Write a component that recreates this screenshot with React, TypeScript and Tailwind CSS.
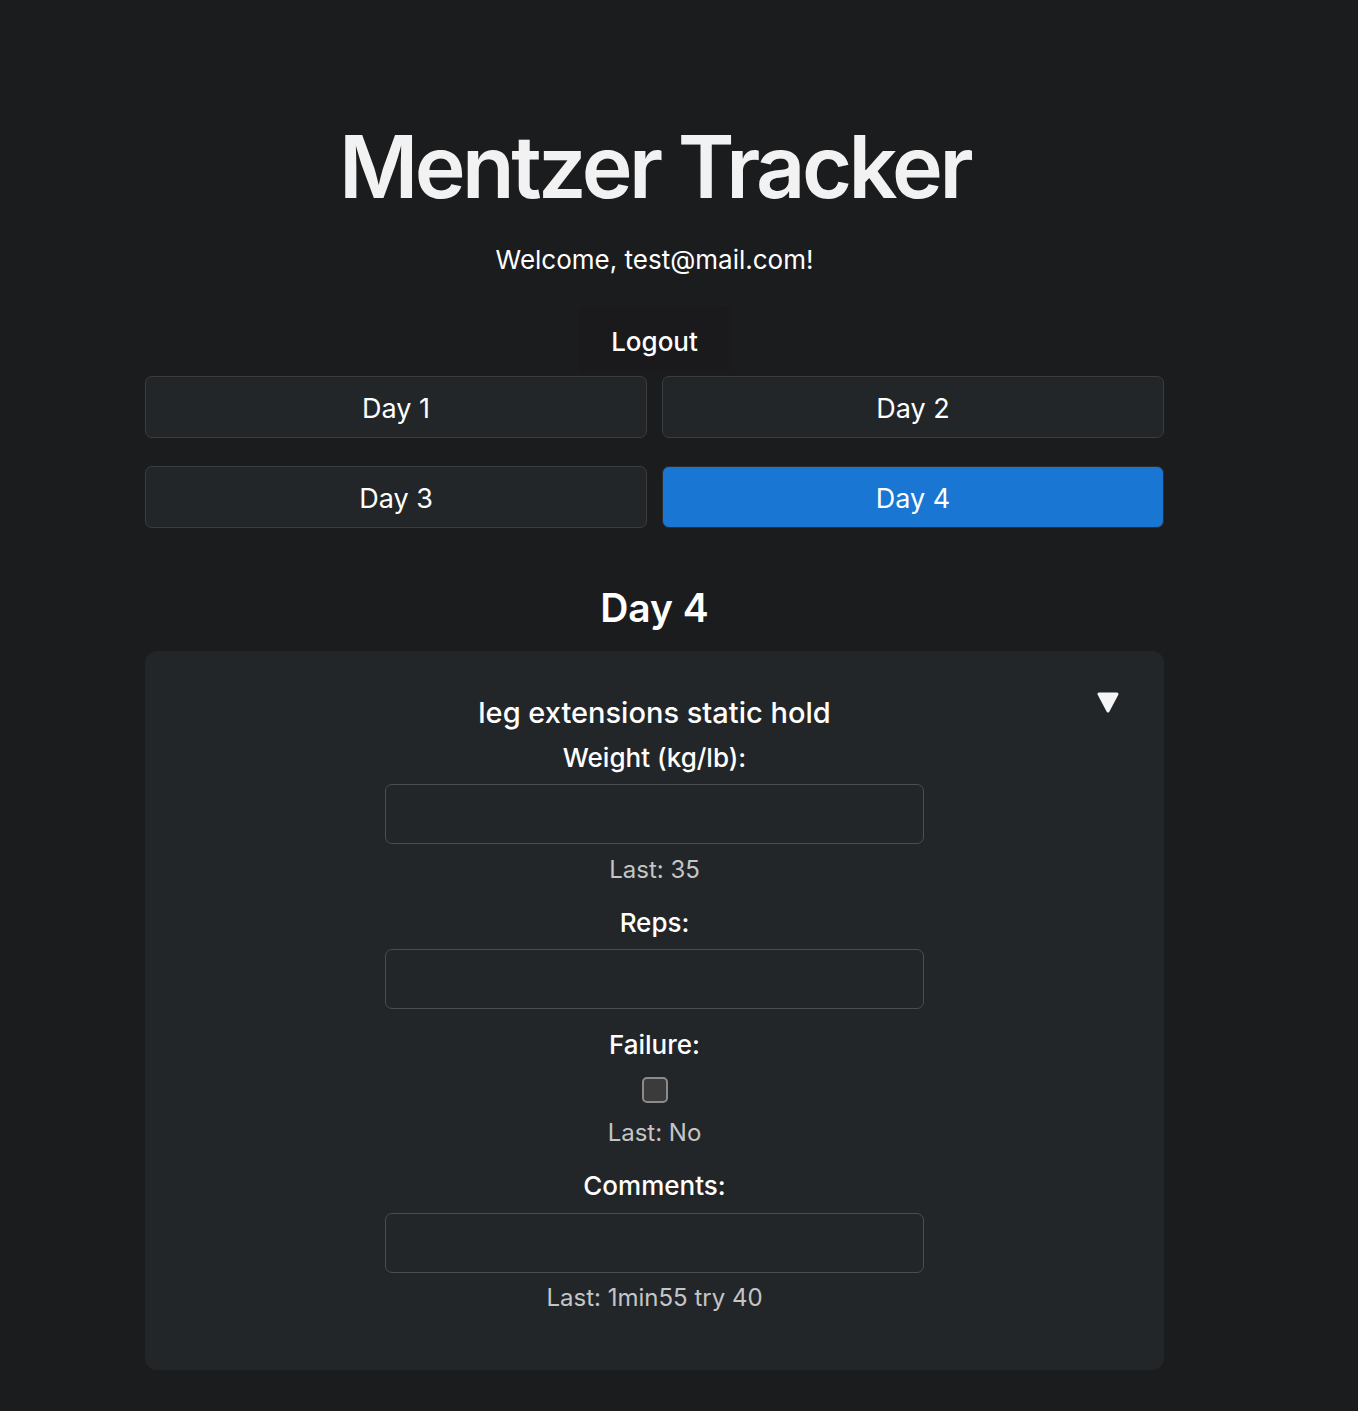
import { useState } from 'react';

const days = ['Day 1', 'Day 2', 'Day 3', 'Day 4'];

function Field({ label, last }: { label: string; last: string }) {
  return (
    <>
      <div className="h-[36px] mt-[17px] flex items-center justify-center text-[26px] font-medium text-white">{label}</div>
      <input
        type="text"
        className="mt-[9px] w-[539px] h-[60px] rounded-[7px] border border-[#4c4d4f] bg-[#232629] outline-none"
      />
      {last && <div className="h-[34px] mt-[9px] flex items-center justify-center text-[24px] text-[#c4c5c6]">{last}</div>}
    </>
  );
}

export default function App() {
  const [active, setActive] = useState('Day 4');

  return (
    <div className="min-h-screen bg-[#1b1c1e] text-[#f2f2f2] font-['Inter','Liberation_Sans',sans-serif]">
      <div className="w-[1019px] ml-[145px] pt-[120px] pb-[41px] flex flex-col items-center">
        <h1 className="h-[94px] leading-[94px] text-[86px] font-semibold tracking-[-3.5px]">Mentzer Tracker</h1>
        <p className="mt-[26px] h-[40px] leading-[40px] text-[26px] text-white">Welcome, test@mail.com!</p>
        <button className="mt-[27px] h-[65px] pt-[4px] px-[34px] rounded-[8px] bg-[#1a1a1c] text-[26px] font-medium text-white">
          Logout
        </button>

        <div className="mt-[4px] w-full grid grid-cols-2 gap-x-[15px] gap-y-[28px]">
          {days.map((d) => (
            <button
              key={d}
              onClick={() => setActive(d)}
              className={
                active === d
                  ? 'h-[62px] pt-[4px] rounded-[7px] border border-[#2c2d2f] bg-[#1976d2] text-[27px] text-white'
                  : 'h-[62px] pt-[4px] rounded-[7px] border border-[#3b3c3e] bg-[#232629] text-[27px] text-white'
              }
            >
              {d}
            </button>
          ))}
        </div>

        <h2 className="mt-[55px] h-[50px] leading-[50px] text-[39px] font-semibold text-white">{active}</h2>

        <div className="relative mt-[18px] w-full rounded-[12px] bg-[#232629] pt-[42px] pb-[55px] flex flex-col items-center">
          <svg className="absolute left-[952px] top-[41px]" width="22" height="21" viewBox="0 0 22 21">
            <polygon points="2,2 20,2 11,19" fill="#f5f5f5" stroke="#f5f5f5" strokeWidth="3" strokeLinejoin="round" />
          </svg>
          <div className="h-[40px] leading-[40px] text-[29px] font-medium text-white">leg extensions static hold</div>
          <div className="h-[40px] mt-[4px] flex items-center justify-center text-[26px] font-medium text-white">Weight (kg/lb):</div>
          <input
            type="text"
            className="mt-[7px] w-[539px] h-[60px] rounded-[7px] border border-[#4c4d4f] bg-[#232629] outline-none"
          />
          <div className="h-[34px] mt-[9px] flex items-center justify-center text-[24px] text-[#c4c5c6]">Last: 35</div>

          <Field label="Reps:" last="" />

          <div className="h-[36px] mt-[17px] flex items-center justify-center text-[26px] font-medium text-white">Failure:</div>
          <div className="mt-[15px] w-[26px] h-[26px] rounded-[5px] border-2 border-[#8b8b8b] bg-[#3b3b3b]" />
          <div className="h-[34px] mt-[13px] flex items-center justify-center text-[24px] text-[#c4c5c6]">Last: No</div>

          <div className="h-[36px] mt-[17px] flex items-center justify-center text-[26px] font-medium text-white">Comments:</div>
          <input
            type="text"
            className="mt-[10px] w-[539px] h-[60px] rounded-[7px] border border-[#4c4d4f] bg-[#232629] outline-none"
          />
          <div className="h-[34px] mt-[8px] flex items-center justify-center text-[24px] text-[#c4c5c6]">Last: 1min55 try 40</div>
        </div>
      </div>
    </div>
  );
}
